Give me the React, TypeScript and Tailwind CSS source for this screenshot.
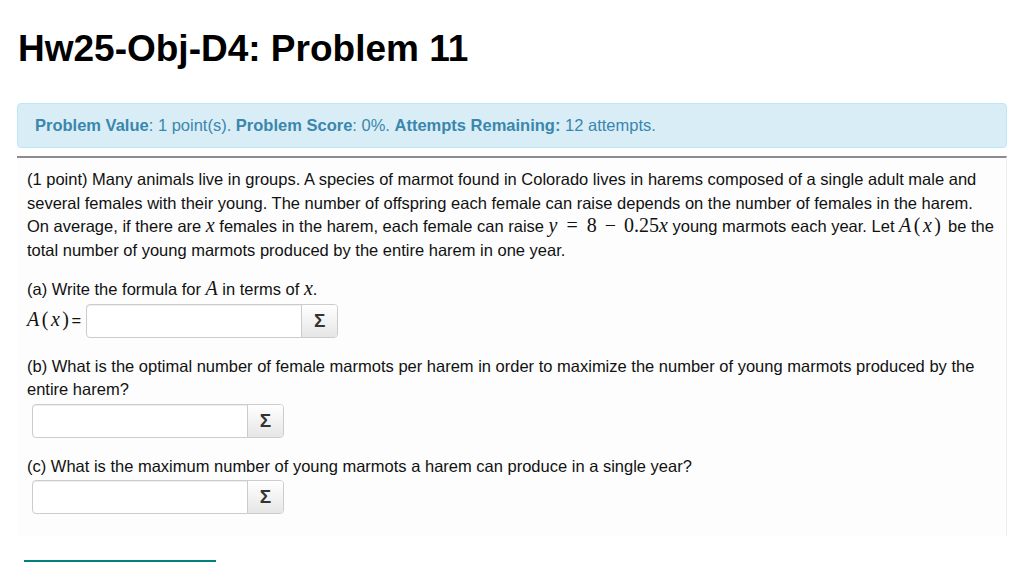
import type { ReactNode } from 'react';

const M = ({ children }: { children: ReactNode }) => (
  <span className="font-['Liberation_Serif',serif] text-[20px] leading-none italic">{children}</span>
);

const N = ({ children }: { children: ReactNode }) => (
  <span className="font-['Liberation_Serif',serif] text-[20px] leading-none">{children}</span>
);

const Ax = () => (
  <span className="tracking-[2.5px]">
    <M>A</M>
    <N>(</N>
    <M>x</M>
    <N>)</N>
  </span>
);

const AnswerBox = () => (
  <div className="flex h-[34px] w-[252px] overflow-hidden rounded-[4px] border border-[#cccccc] bg-white shadow-[inset_0_1px_1px_rgba(0,0,0,0.075)]">
    <div className="flex-1" />
    <div className="flex w-[36px] items-center justify-center border-l border-[#cccccc] bg-gradient-to-b from-white to-[#e6e6e6] text-[19px] font-bold text-[#333]">
      Σ
    </div>
  </div>
);

export default function App() {
  return (
    <div className="h-[565px] overflow-hidden bg-white font-['Liberation_Sans',Arial,sans-serif] text-black">
      <h1 className="pl-[18px] pt-[27px] text-[37px] font-bold leading-[44px]">Hw25-Obj-D4: Problem 11</h1>

      <div className="mx-[17px] mt-[32px] flex h-[45px] items-center rounded-[4px] border border-[#bce8f1] bg-[#d9edf7] px-[17px] text-[16.5px] text-[#3a87ad]">
        <span>
          <b>Problem Value</b>: 1 point(s). <b>Problem Score</b>: 0%. <b>Attempts Remaining:</b> 12 attempts.
        </span>
      </div>

      <div className="mx-[17px] mt-[8px] h-[380px] border-t-2 border-r border-t-[#8c8c8c] border-r-[#eeeeee] bg-[#fdfdfd] px-[10px] pt-[10px] text-[16.5px] leading-[23.5px] text-[#111]">
        <p>
          (1 point) Many animals live in groups. A species of marmot found in Colorado lives in harems composed of a single adult male and
          several females with their young. The number of offspring each female can raise depends on the number of females in the harem.
          On average, if there are <M>x</M> females in the harem, each female can raise <M>y</M>
          <N>
            <span className="mx-[9px]">=</span>8<span className="mx-[8px]">−</span>0.25
          </N>
          <M>x</M> young marmots each year. Let <Ax /> be the total number of young marmots produced by the entire harem in one year.
        </p>

        <p className="mt-[16px]">
          (a) Write the formula for <M>A</M> in terms of <M>x</M>.
        </p>
        <div className="mt-[2px] flex items-center">
          <span className="mr-[5px]">
            <Ax />=
          </span>
          <AnswerBox />
        </div>

        <p className="mt-[17px]">
          (b) What is the optimal number of female marmots per harem in order to maximize the number of young marmots produced by the
          entire harem?
        </p>
        <div className="mt-[2px] pl-[5px]">
          <AnswerBox />
        </div>

        <p className="mt-[17px]">(c) What is the maximum number of young marmots a harem can produce in a single year?</p>
        <div className="mt-[2px] pl-[5px]">
          <AnswerBox />
        </div>
      </div>

      <div className="ml-[24px] mt-[24px] h-[2px] w-[192px] bg-[#00827f]" />
    </div>
  );
}
